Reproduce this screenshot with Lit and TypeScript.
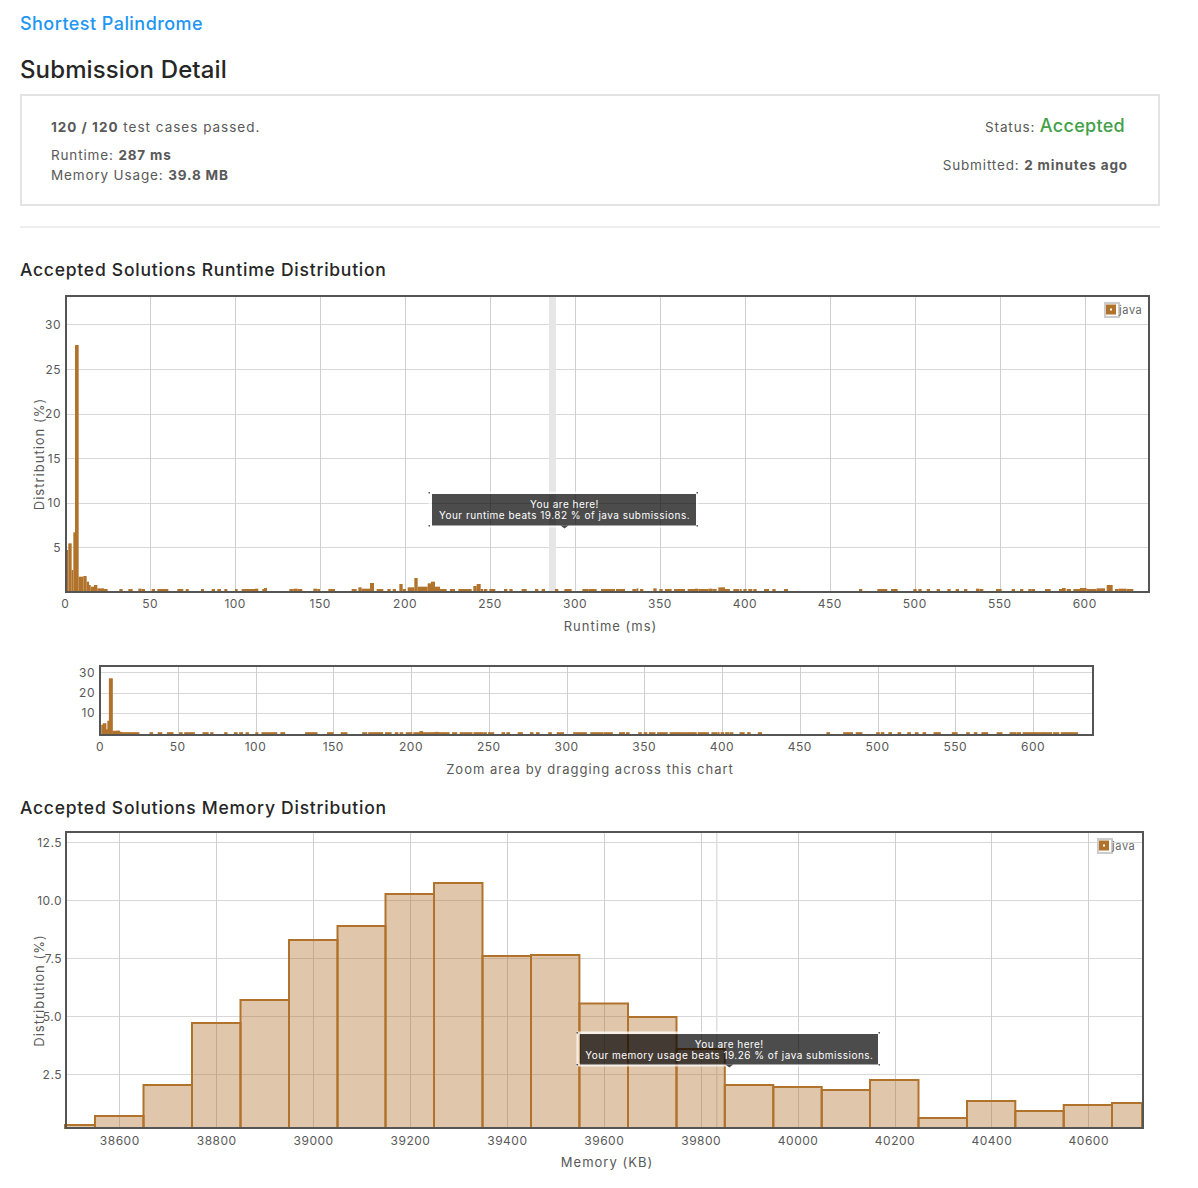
import { LitElement, css, html, svg } from "lit";
import { customElement } from "lit/decorators.js";

type Run = [number, number, number]; // screen x1, screen x2, height in px

const BROWN = "#b1732c";

// bars of the runtime chart, read off the reference as [x1, x2, top] in 3x crop coordinates
const crop = (originX: number, base: number, runs: number[][]): Run[] =>
  runs.map(([a, b, top]) => [originX + a / 3, originX + b / 3, Math.max(2, (base - top) / 3)]);

const runtimeRuns: Run[] = [
  ...crop(20, 903, [
    [140, 145, 780], [145, 155, 760], [155, 160, 840], [160, 165, 727], [165, 176, 165],
    [176, 190, 860], [190, 200, 858], [200, 207, 875], [207, 212, 885], [212, 222, 890],
    [222, 232, 885], [232, 252, 895], [252, 263, 898], [298, 308, 898], [325, 338, 898],
    [355, 365, 896], [365, 375, 899], [395, 405, 898], [412, 445, 898], [472, 490, 898],
    [497, 506, 898], [543, 552, 898], [575, 585, 898], [592, 603, 898], [613, 622, 898],
    [645, 653, 898], [665, 705, 898], [705, 715, 896], [727, 732, 898], [732, 741, 894],
    [808, 820, 898], [820, 833, 896], [833, 847, 898], [880, 892, 896], [892, 900, 899],
  ]),
  ...crop(320, 63, [
    [25, 45, 59], [95, 110, 60], [115, 125, 52], [125, 150, 56], [150, 162, 39], [170, 190, 60],
    [202, 212, 60], [218, 228, 57], [238, 248, 42], [248, 258, 58], [263, 283, 52], [283, 293, 24],
    [293, 323, 50], [323, 333, 40], [333, 345, 35], [345, 360, 50], [360, 380, 57], [390, 405, 57],
    [415, 455, 57], [460, 470, 48], [470, 482, 42], [482, 490, 58], [492, 502, 60], [508, 526, 60],
    [552, 562, 60], [568, 578, 60], [605, 620, 58], [645, 655, 60], [665, 675, 57], [705, 715, 60],
    [733, 755, 60], [787, 805, 60], [805, 830, 57], [843, 885, 58], [888, 915, 60], [937, 950, 58],
    [950, 955, 55], [960, 970, 58], [1000, 1010, 55], [1018, 1028, 60], [1035, 1055, 60],
    [1062, 1095, 60], [1103, 1125, 59], [1125, 1135, 56], [1135, 1165, 59], [1165, 1178, 56],
    [1178, 1190, 60], [1195, 1215, 52], [1215, 1230, 58], [1240, 1258, 60],
  ]),
  ...crop(740, 63, [
    [0, 5, 60], [10, 20, 60], [25, 37, 58], [40, 50, 60], [72, 87, 60], [97, 107, 60], [132, 144, 60],
    [357, 367, 60], [412, 442, 58], [453, 473, 60], [520, 530, 60], [535, 545, 60], [560, 570, 60],
    [590, 600, 60], [622, 632, 60], [647, 657, 60], [672, 682, 57], [708, 718, 56], [718, 730, 60],
    [768, 785, 60], [815, 825, 60], [840, 850, 60], [865, 875, 60], [875, 885, 57], [915, 932, 60],
    [957, 966, 60], [966, 977, 54], [980, 993, 57], [1000, 1020, 57], [1020, 1040, 54],
    [1040, 1070, 58], [1070, 1095, 55], [1100, 1118, 45], [1125, 1135, 59], [1135, 1160, 56],
    [1160, 1180, 60],
  ]),
];

const memoryEdges = [
  65, 95, 143.5, 192, 240.5, 289, 337.5, 385.5, 434, 482.5, 531, 579.4, 628, 676.5, 724.8,
  773.3, 821.7, 870, 918.5, 967, 1015.3, 1063.7, 1112, 1142,
];
const memoryTops = [
  1125, 1116, 1085, 1023, 1000, 940, 926, 894, 883, 956, 955, 1003.5, 1017, 1049, 1085, 1087,
  1090, 1080, 1118, 1101, 1111, 1105, 1103,
];

// keep 1px grid lines on the pixel
const crisp = (v: number) => Math.round(v) + 0.5;

const tick = (x: number, y: number, label: string, anchor = "middle") =>
  svg`<text class="tick" x=${x} y=${y} text-anchor=${anchor} dominant-baseline="central">${label}</text>`;

const legend = (x: number, y: number) => svg`
  <rect x=${x + 1} y=${y + 1} width="14" height="14" fill="#fff" stroke="#ccc" stroke-width="2"></rect>
  <rect x=${x + 2} y=${y + 2.5} width="10" height="10" fill=${BROWN}></rect>
  <rect x=${x + 6} y=${y + 6.5} width="2" height="2" fill="#fff"></rect>
  <text class="legend" x=${x + 15} y=${y + 8} dominant-baseline="central">java</text>
`;

// dark label with the corner marks and the small notch under it
const tooltip = (x1: number, x2: number, y1: number, y2: number, cx: number, line1: string, line2: string) => svg`
  <rect x=${x1 + 1} y=${y1 + 0.5} width=${x2 - x1 - 1} height=${y2 - y1} fill="none" stroke="rgba(255,255,255,.72)" stroke-width="3"></rect>
  <rect x=${x1 + 3} y=${y1 + 1.5} width=${x2 - x1 - 4} height=${y2 - y1 - 1.5} fill="rgba(0,0,0,.7)"></rect>
  <path d="M${cx - 4} ${y2}L${cx} ${y2 + 3}L${cx + 4} ${y2}Z" fill="rgba(0,0,0,.7)"></path>
  ${[[x1, y1], [x2, y1], [x1, y2], [x2, y2]].map(
    ([px, py]) => svg`<rect x=${px - 0.5} y=${py - 0.5} width="1.5" height="1.5" fill="#555"></rect>`,
  )}
  <text class="tip" x=${cx} y=${y1 + 11.5} text-anchor="middle" dominant-baseline="central">${line1}</text>
  <text class="tip" x=${cx} y=${y1 + 22} text-anchor="middle" dominant-baseline="central">${line2}</text>
`;

@customElement("app-root")
export class AppRoot extends LitElement {
  static styles = css`
    :host {
      display: block;
      width: 1198px;
      height: 1188px;
      overflow: hidden;
      background: #fff;
      font-family: Inter, "Liberation Sans", sans-serif;
      color: #262626;
    }
    .page {
      width: 1140px;
      padding: 12px 38px 0 20px;
    }
    .problem {
      display: block;
      font-size: 18px;
      line-height: 24px;
      font-weight: 500;
      letter-spacing: 0.45px;
      color: #2196f3;
      text-decoration: none;
    }
    h2 {
      margin: 18px 0 8px;
      font-size: 24px;
      line-height: 32px;
      font-weight: 450;
      letter-spacing: 0.12px;
    }
    .card {
      box-sizing: border-box;
      height: 112px;
      border: 2px solid #e3e3e3;
      padding: 21px 30px 0 29px;
      display: flex;
      justify-content: space-between;
      font-size: 13.5px;
      color: #595959;
      letter-spacing: 0.85px;
    }
    .card b {
      font-weight: 700;
    }
    .passed {
      line-height: 20px;
      margin-bottom: 8px;
      letter-spacing: 1px;
    }
    .row {
      line-height: 20px;
    }
    .right {
      text-align: right;
      margin-top: -1px;
    }
    .status {
      line-height: 20px;
      margin: 0 3px 18px 0;
    }
    .accepted {
      font-size: 18px;
      font-weight: 500;
      letter-spacing: 0.3px;
      color: #43a047;
    }
    hr {
      margin: 20px 0 0;
      border: 0;
      height: 2px;
      background: #eee;
    }
    h3 {
      margin: 30px 0 0;
      font-size: 17.5px;
      line-height: 24px;
      font-weight: 450;
      letter-spacing: 0.75px;
    }
    svg {
      display: block;
      width: 1140px;
    }
    .tick {
      font-size: 12px;
      letter-spacing: 0.5px;
      fill: #595959;
    }
    .axis {
      font-size: 13px;
      letter-spacing: 1px;
      fill: #595959;
    }
    .legend {
      font-size: 11px;
      letter-spacing: 0.6px;
      fill: #666;
    }
    .tip {
      font-size: 10px;
      letter-spacing: 0.48px;
      fill: #fff;
    }
    .memory-title {
      margin-top: 0;
    }
  `;

  private runtimeChart() {
    const xs = [0, 50, 100, 150, 200, 250, 300, 350, 400, 450, 500, 550, 600];
    const ys = [5, 10, 15, 20, 25, 30];
    return svg`
      ${ys.map((v) => {
        const y = 592 - v * 8.92;
        return svg`<line x1="66" x2="1148" y1=${crisp(y)} y2=${crisp(y)} stroke="#d8d8d8"></line>${tick(61, y, String(v), "end")}`;
      })}
      <rect x="549" y="297" width="7" height="294" fill="#e6e6e6"></rect>
      ${xs.map((v) => {
        const x = 65.3 + v * 1.699;
        return svg`${v ? svg`<line x1=${crisp(x)} x2=${crisp(x)} y1="297" y2="591" stroke="#cfcfcf"></line>` : ""}${tick(x, 603.5, String(v))}`;
      })}
      ${runtimeRuns.map(
        ([a, b, h]) => svg`<rect x=${a} y=${591 - h} width=${b - a} height=${h} fill=${BROWN}></rect>`,
      )}
      <rect x="66" y="296" width="1083" height="296" fill="none" stroke="#555" stroke-width="2"></rect>
      ${legend(1104, 302)}
      ${tooltip(429, 697, 492.5, 525.5, 564.5, "You are here!", "Your runtime beats 19.82 % of java submissions.")}
      <text class="axis" text-anchor="middle" dominant-baseline="central" transform="translate(38.5 454) rotate(-90)">Distribution (%)</text>
      <text class="axis" x="610.5" y="626" text-anchor="middle" dominant-baseline="central">Runtime (ms)</text>
    `;
  }

  private navigatorChart() {
    const xs = [0, 50, 100, 150, 200, 250, 300, 350, 400, 450, 500, 550, 600];
    const toMini = (x: number) => 100 + ((x - 65.3) / 1.699) * 1.555;
    return svg`
      ${[10, 20, 30].map((v) => {
        const y = 733 - v * 2.02;
        return svg`<line x1="100" x2="1092" y1=${crisp(y)} y2=${crisp(y)} stroke="#d8d8d8"></line>${tick(95, y, String(v), "end")}`;
      })}
      ${xs.map((v) => {
        const x = 100 + v * 1.555;
        return svg`${v ? svg`<line x1=${crisp(x)} x2=${crisp(x)} y1="666" y2="734" stroke="#cfcfcf"></line>` : ""}${tick(x, 746, String(v))}`;
      })}
      ${runtimeRuns.map(([a, b, h]) => {
        const mh = Math.max(1.8, (h / 8.92) * 2.02);
        return svg`<rect x=${toMini(a)} y=${734 - mh} width=${toMini(b) - toMini(a) + 0.6} height=${mh} fill=${BROWN}></rect>`;
      })}
      <rect x="100" y="666" width="993" height="69" fill="none" stroke="#555" stroke-width="2"></rect>
      <text class="axis" x="590" y="769" text-anchor="middle" dominant-baseline="central">Zoom area by dragging across this chart</text>
    `;
  }

  private memoryChart() {
    const ys = [2.5, 5, 7.5, 10, 12.5];
    const xs = [38600, 38800, 39000, 39200, 39400, 39600, 39800, 40000, 40200, 40400, 40600];
    return svg`
      ${ys.map((v) => {
        const y = 1132 - v * 23.2;
        return svg`<line x1="66" x2="1142" y1=${crisp(y)} y2=${crisp(y)} stroke="#d8d8d8"></line>${tick(62, y, v.toFixed(1), "end")}`;
      })}
      ${xs.map((v, i) => {
        const x = 119.3 + i * 96.9;
        return svg`<line x1=${crisp(x)} x2=${crisp(x)} y1="833" y2="1127" stroke="#cfcfcf"></line>${tick(x + 0.5, 1140, String(v))}`;
      })}
      <rect x="716" y="833" width="1.5" height="294" fill="#e0e0e0"></rect>
      ${memoryTops.map((top, i) => {
        const a = memoryEdges[i];
        const b = memoryEdges[i + 1];
        return svg`<rect x=${a} y=${top} width=${b - a} height=${1128 - top} fill="rgba(177,115,44,.4)" stroke=${BROWN} stroke-width="2"></rect>`;
      })}
      <rect x="66" y="832" width="1077" height="296" fill="none" stroke="#555" stroke-width="2"></rect>
      ${legend(1097, 838)}
      ${tooltip(577, 879, 1032.5, 1064.5, 729.3, "You are here!", "Your memory usage beats 19.26 % of java submissions.")}
      <text class="axis" text-anchor="middle" dominant-baseline="central" transform="translate(38.5 990.5) rotate(-90)">Distribution (%)</text>
      <text class="axis" x="607" y="1162" text-anchor="middle" dominant-baseline="central">Memory (KB)</text>
    `;
  }

  render() {
    return html`
      <div class="page">
        <a class="problem" href="#">Shortest Palindrome</a>
        <h2>Submission Detail</h2>
        <div class="card">
          <div>
            <div class="passed"><b>120 / 120</b> test cases passed.</div>
            <div class="row">Runtime: <b>287 ms</b></div>
            <div class="row">Memory Usage: <b>39.8 MB</b></div>
          </div>
          <div class="right">
            <div class="status">Status: <span class="accepted">Accepted</span></div>
            <div class="row">Submitted: <b>2 minutes ago</b></div>
          </div>
        </div>
        <hr />
        <h3>Accepted Solutions Runtime Distribution</h3>
        <svg viewBox="20 282 1140 514" height="514">
          ${this.runtimeChart()}${this.navigatorChart()}
        </svg>
        <h3 class="memory-title">Accepted Solutions Memory Distribution</h3>
        <svg viewBox="20 820 1140 356" height="356">${this.memoryChart()}</svg>
      </div>
    `;
  }
}
